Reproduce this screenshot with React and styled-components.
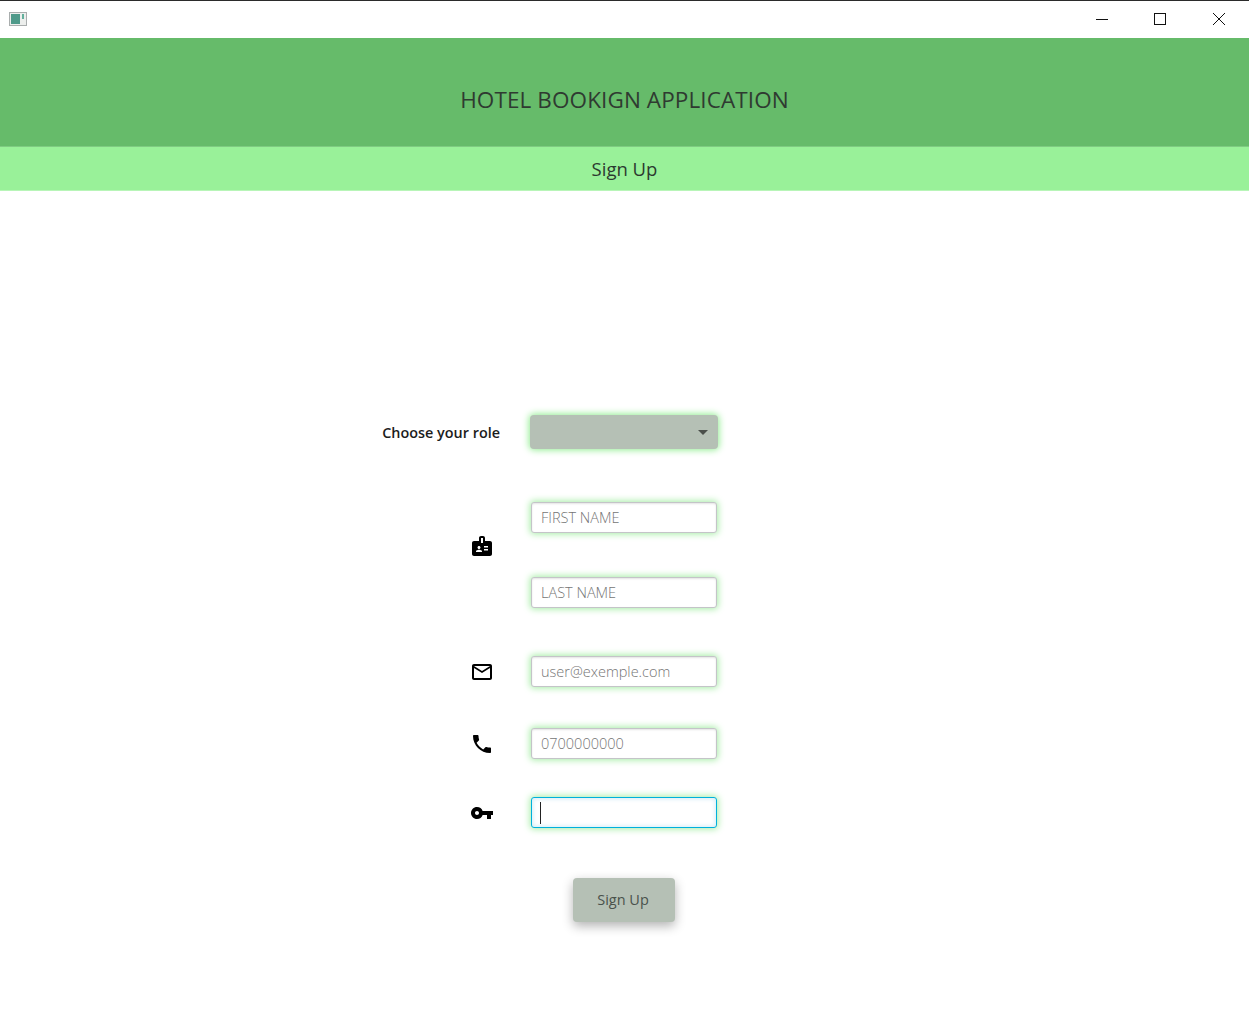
import React from 'react';
import styled, { createGlobalStyle } from 'styled-components';
import { MdBadge, MdMailOutline, MdPhone, MdVpnKey } from 'react-icons/md';

const GlobalStyle = createGlobalStyle`
html, body {
  margin: 0;
  padding: 0;
  background: #fff;
  font-family: "Open Sans", "Noto Sans", sans-serif;
}
`;

const App = () => {
  return (
    <Page>
      <GlobalStyle />
      <TitleBar>
        <AppIcon width="18" height="14" viewBox="0 0 18 14">
          <rect x="0.5" y="0.5" width="17" height="13" fill="#eceeec" stroke="#a9adad" />
          <rect x="2" y="2" width="9" height="10" fill="#4f9a8a" />
          <rect x="13" y="2" width="2" height="5" fill="#63b09c" />
        </AppIcon>
        <WindowButtons>
          <WindowButton>
            <svg width="14" height="14" viewBox="0 0 14 14"><path d="M1 7.5h12" stroke="#111" strokeWidth="1" /></svg>
          </WindowButton>
          <WindowButton>
            <svg width="14" height="14" viewBox="0 0 14 14"><rect x="1.5" y="1.5" width="11" height="11" fill="none" stroke="#111" /></svg>
          </WindowButton>
          <WindowButton>
            <svg width="14" height="14" viewBox="0 0 14 14"><path d="M1 1l12 12M13 1L1 13" stroke="#111" strokeWidth="1" /></svg>
          </WindowButton>
        </WindowButtons>
      </TitleBar>
      <Header>
        <H1>HOTEL BOOKIGN APPLICATION</H1>
      </Header>
      <SubHeader>Sign Up</SubHeader>
      <Form>
        <Row>
          <RoleLabel>Choose your role</RoleLabel>
          <Select>
            <Arrow />
          </Select>
        </Row>
        <Row $top={53}>
          <IconSlot $lift={18}><MdBadge size={24} /></IconSlot>
          <Stack>
            <Input placeholder="FIRST NAME" readOnly />
            <Input placeholder="LAST NAME" readOnly />
          </Stack>
        </Row>
        <Row $top={48}>
          <IconSlot><MdMailOutline size={24} /></IconSlot>
          <Input placeholder="user@exemple.com" readOnly />
        </Row>
        <Row $top={41}>
          <IconSlot><MdPhone size={24} /></IconSlot>
          <Input placeholder="0700000000" readOnly />
        </Row>
        <Row $top={38}>
          <IconSlot><MdVpnKey size={24} /></IconSlot>
          <FocusWrap>
            <Input $focused type="password" readOnly />
            <Caret />
          </FocusWrap>
        </Row>
        <Row $top={50}>
          <span />
          <ButtonCell>
            <Button>Sign Up</Button>
          </ButtonCell>
        </Row>
      </Form>
    </Page>
  );
};

export default App;

const Page = styled.div`
width: 1249px;
min-height: 1020px;
background: #fff;
display: flex;
flex-direction: column;
`;
const TitleBar = styled.div`
height: 37px;
border-top: 1px solid #2b2b2b;
display: flex;
align-items: center;
justify-content: space-between;
padding-left: 9px;
background: #fff;
`;
const AppIcon = styled.svg`
display: block;
margin-bottom: 2px;
`;
const WindowButtons = styled.div`
display: flex;
padding-right: 1px;
margin-bottom: 2px;
`;
const WindowButton = styled.div`
width: 58.5px;
height: 35px;
display: flex;
align-items: center;
justify-content: center;
`;
const Header = styled.div`
height: 109px;
background: #66bb6a;
display: flex;
justify-content: center;
padding-top: 45px;
box-sizing: border-box;
border-bottom: 1px solid #7fcb82;
`;
const H1 = styled.div`
font-size: 22.5px;
line-height: 34px;
font-weight: 400;
letter-spacing: 0.1px;
color: #2f3a31;
`;
const SubHeader = styled.div`
height: 44px;
background: #99f199;
border-bottom: 1px solid #b8f5b8;
box-sizing: border-box;
display: flex;
align-items: center;
justify-content: center;
font-size: 18.5px;
font-weight: 400;
color: #2c3a30;
`;
const Form = styled.div`
padding-top: 224px;
display: flex;
flex-direction: column;
`;
const Row = styled.div`
display: grid;
grid-template-columns: 500px 188px;
column-gap: 30px;
align-items: center;
margin-top: ${p => p.$top || 0}px;
`;
const RoleLabel = styled.div`
justify-self: end;
font-size: 14.4px;
font-weight: 600;
color: #1c1c1c;
`;
const IconSlot = styled.div`
justify-self: end;
width: 24px;
height: 24px;
margin-right: 6px;
margin-bottom: ${p => p.$lift || 0}px;
color: #000;
`;
const Select = styled.div`
height: 34px;
background: #b5c0b5;
border-radius: 4px;
box-shadow: 0 0 7px 1px #90ec90;
position: relative;
`;
const Arrow = styled.div`
position: absolute;
right: 10px;
top: 15px;
width: 0;
height: 0;
border-left: 5px solid transparent;
border-right: 5px solid transparent;
border-top: 5px solid #4a4f4a;
`;
const Stack = styled.div`
display: flex;
flex-direction: column;
gap: 44px;
`;
const Input = styled.input`
display: block;
width: 186px;
height: 31px;
margin: 0 1px;
box-sizing: border-box;
padding: 0 9px;
border-radius: 3px;
border: ${p => (p.$focused ? '1.5px solid #00b0dc' : '1px solid #c4c4c8')};
background: #fff;
outline: none;
font-family: "Open Sans", "Noto Sans", sans-serif;
font-size: 14.5px;
font-weight: 300;
color: #333;
box-shadow: 0 0 7px 1px #a4eca4, ${p => (p.$focused ? 'inset 0 0 4px 1px #d4ecf6' : 'inset 0 1px 2px #e4e4e4')};

::placeholder {
  color: #a8a8b2;
  opacity: 1;
}
`;
const FocusWrap = styled.div`
position: relative;
`;
const Caret = styled.div`
position: absolute;
left: 10px;
top: 5px;
width: 1px;
height: 22px;
background: #222;
`;
const ButtonCell = styled.div`
display: flex;
justify-content: center;
`;
const Button = styled.div`
width: 102px;
height: 44px;
padding-bottom: 2px;
padding-right: 2px;
box-sizing: border-box;
background: #b5c0b5;
border-radius: 4px;
box-shadow: 0 4px 11px rgba(0, 0, 0, 0.3);
display: flex;
align-items: center;
justify-content: center;
font-size: 14.5px;
font-weight: 400;
color: #4a524c;
`;
